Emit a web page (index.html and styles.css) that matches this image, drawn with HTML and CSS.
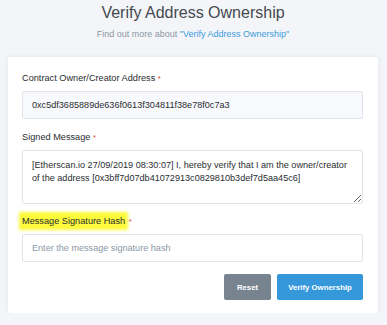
FILE: index.html
```html
<!DOCTYPE html>
<html lang="en">

<head>
    <meta charset="UTF-8">
    <meta name="viewport" content="width=device-width, initial-scale=1.0">
    <title>Verify Address Ownership</title>
    <link rel="stylesheet" href="styles.css">
</head>

<body>
    <div class="page">
        <h1 class="title">Verify Address Ownership</h1>
        <p class="subtitle">Find out more about <a href="#">"Verify Address Ownership"</a></p>

        <form class="card">
            <div class="group">
                <label class="label">Contract Owner/Creator Address <span class="req">*</span></label>
                <input class="field readonly" type="text" value="0xc5df3685889de636f0613f304811f38e78f0c7a3" readonly>
            </div>
            <div class="group">
                <label class="label">Signed Message <span class="req">*</span></label>
                <textarea class="field area" readonly>[Etherscan.io 27/09/2019 08:30:07] I, hereby verify that I am the owner/creator of the address [0x3bff7d07db41072913c0829810b3def7d5aa45c6]</textarea>
            </div>
            <div class="group">
                <label class="label"><span class="mark">Message Signature Hash</span> <span class="req">*</span></label>
                <input class="field" type="text" placeholder="Enter the message signature hash">
            </div>
            <div class="actions">
                <button type="button" class="btn reset">Reset</button>
                <button type="button" class="btn verify">Verify Ownership</button>
            </div>
        </form>
    </div>
</body>

</html>
```

FILE: styles.css
```css
* {
    margin: 0;
    padding: 0;
    box-sizing: border-box;
}

body {
    background-color: #f4f5f8;
    font-family: "Liberation Sans", Arial, sans-serif;
    color: #1e2022;
}

.page {
    padding: 2.5px 9px 0 8px;
}

.title {
    font-size: 16px;
    line-height: 20px;
    font-weight: normal;
    color: #444950;
    text-align: center;
}

.subtitle {
    margin-top: 5.5px;
    font-size: 9px;
    line-height: 12px;
    color: #8c98a4;
    text-align: center;
}

.subtitle a {
    color: #3d9ddc;
    text-decoration: none;
}

.card {
    margin-top: 17px;
    background-color: #fff;
    border-radius: 3px;
    box-shadow: 0 0 5px rgba(140, 152, 164, 0.18);
    padding: 15px 15px 13px 14px;
}

.group {
    margin-bottom: 11.5px;
}

.label {
    display: block;
    font-size: 9.2px;
    line-height: 13px;
    color: #2a2d30;
    margin-bottom: 6px;
}

.req {
    color: #de4437;
    font-size: 7.5px;
    vertical-align: top;
}

.mark {
    background-color: #fdfa3c;
    box-shadow: 0 0 3px 2px #fdfa3c;
    padding: 2px 1px;
    margin-left: -1px;
}

.field {
    display: block;
    width: 100%;
    height: 28px;
    border: 1px solid #e1e5eb;
    border-radius: 2px;
    background-color: #fff;
    padding: 0 9px;
    font-family: "Liberation Sans", Arial, sans-serif;
    font-size: 9.1px;
    color: #2a2d30;
    outline: none;
}

.field::placeholder {
    color: #8c98a4;
}

.readonly {
    background-color: #f8f9fc;
}

.area {
    height: 54px;
    padding: 8px 8px 0 9px;
    line-height: 13px;
    resize: vertical;
}

.actions {
    display: flex;
    justify-content: flex-end;
    gap: 6px;
    padding-top: 0.5px;
}

.btn {
    height: 26px;
    border: none;
    border-radius: 2px;
    color: #fff;
    font-family: "Liberation Sans", Arial, sans-serif;
    font-size: 7.8px;
    font-weight: bold;
}

.reset {
    width: 47px;
    background-color: #77838f;
}

.verify {
    width: 86px;
    background-color: #3498db;
}
```
